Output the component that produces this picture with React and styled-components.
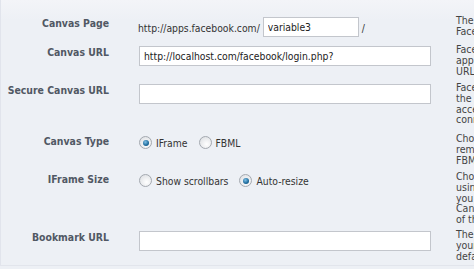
import React from "react";
import styled, { createGlobalStyle } from "styled-components";

const GlobalStyle = createGlobalStyle`
  html, body {
    margin: 0;
    padding: 0;
    background: #edf0f5;
    overflow: hidden;
  }
`;

const rows = [
  {
    label: "Canvas Page",
    kind: "page",
    h: 29,
    help: ["The base Canvas Page URL on", "Facebook for your application."],
  },
  {
    label: "Canvas URL",
    kind: "text",
    value: "http://localhost.com/facebook/login.php?",
    h: 38,
    help: [
      "Facebook pulls the content for your",
      "app's canvas pages from this base",
      "URL.",
    ],
  },
  {
    label: "Secure Canvas URL",
    kind: "text",
    value: "",
    h: 51,
    help: [
      "Facebook pulls content from this URL if",
      "the user is browsing Facebook over a",
      "accessing your app over a secure",
      "connection (https).",
    ],
  },
  {
    label: "Canvas Type",
    kind: "radio",
    h: 38,
    options: [
      { text: "IFrame", checked: true },
      { text: "FBML", checked: false },
    ],
    help: [
      "Choose IFrame for new apps. Please",
      "remember that support for FBML is",
      "FBML being deprecated.",
    ],
  },
  {
    label: "IFrame Size",
    kind: "radio",
    h: 58,
    options: [
      { text: "Show scrollbars", checked: false },
      { text: "Auto-resize", checked: true },
    ],
    help: [
      "Choose whether the iframe is sized",
      "using scrollbars, or whether",
      "you will call the auto-resize",
      "Canvas method to set the height",
      "of the iframe.",
    ],
  },
  {
    label: "Bookmark URL",
    kind: "text",
    value: "",
    h: 36,
    help: [
      "The URL that users will see when",
      "your app is bookmarked. Uses the",
      "default Canvas Page if left blank.",
    ],
  },
];

const App = () => {
  return (
    <>
      <GlobalStyle />
      <Panel>
        {rows.map((row) => (
          <Row key={row.label} $h={row.h}>
            <Label>{row.label}</Label>
            <Control>
              {row.kind === "page" && (
                <PageLine>
                  <Prefix>http://apps.facebook.com/</Prefix>
                  <SmallInput defaultValue="variable3" />
                  <Prefix>/</Prefix>
                </PageLine>
              )}
              {row.kind === "text" && <TextInput defaultValue={row.value} />}
              {row.kind === "radio" && (
                <RadioLine>
                  {row.options.map((opt) => (
                    <RadioLabel key={opt.text}>
                      <Radio
                        type="radio"
                        name={row.label}
                        defaultChecked={opt.checked}
                      />
                      {opt.text}
                    </RadioLabel>
                  ))}
                </RadioLine>
              )}
            </Control>
            <Help>
              {row.help.map((line, i) => (
                <div key={i}>{line}</div>
              ))}
            </Help>
          </Row>
        ))}
      </Panel>
    </>
  );
};

const Panel = styled.div`
  width: 474px;
  height: 266px;
  box-sizing: border-box;
  padding-top: 15px;
  background: linear-gradient(#f3f4f8, #edf0f5 20px);
  border-left: 1px solid #e1e4ec;
  border-bottom: 1px solid #e2e5ec;
  overflow: hidden;
`;

const Row = styled.div`
  display: flex;
  align-items: flex-start;
  height: ${(p) => p.$h}px;
`;

const Label = styled.div`
  flex: 0 0 108px;
  padding-top: 1px;
  text-align: right;
  font-family: "DejaVu Sans Condensed", "DejaVu Sans", sans-serif;
  font-weight: bold;
  font-size: 10.4px;
  line-height: 14px;
  color: #515864;
  white-space: nowrap;
`;

const Control = styled.div`
  flex: 0 0 292px;
  margin-left: 30px;
  padding-top: 2px;
  font-family: "DejaVu Sans Condensed", "DejaVu Sans", sans-serif;
  font-size: 10.3px;
  color: #333;
`;

const PageLine = styled.div`
  display: flex;
  align-items: center;
  gap: 3px;
  margin-left: -1px;
`;

const Prefix = styled.span`
  padding-top: 2px;
  white-space: nowrap;
`;

const inputBase = `
  box-sizing: border-box;
  height: 20px;
  border: 1px solid #c3c6cc;
  background: #fff;
  font-family: "DejaVu Sans Condensed", "DejaVu Sans", sans-serif;
  font-size: 10.3px;
  color: #222;
  padding: 0 4px;
  outline: none;
  margin: 0;
`;

const TextInput = styled.input`
  ${inputBase}
  width: 292px;
`;

const SmallInput = styled.input`
  ${inputBase}
  width: 96px;
`;

const RadioLine = styled.div`
  display: flex;
  align-items: center;
  gap: 11px;
  padding-top: 1px;
`;

const RadioLabel = styled.label`
  display: flex;
  align-items: center;
  gap: 4px;
  white-space: nowrap;
`;

const Radio = styled.input`
  appearance: none;
  margin: 0;
  width: 13px;
  height: 13px;
  border-radius: 50%;
  border: 1px solid #a4a9b0;
  background: radial-gradient(circle at 60% 65%, #ffffff 0%, #e4e6e9 70%, #cfd2d6 100%);
  box-sizing: border-box;
  display: grid;
  place-items: center;

  &:checked::after {
    content: "";
    width: 6px;
    height: 6px;
    border-radius: 50%;
    background: radial-gradient(circle at 40% 35%, #7fc0e6 0%, #1d6a9b 60%, #154d73 100%);
  }
`;

const Help = styled.div`
  flex: 0 0 auto;
  margin-left: 25px;
  font-family: "DejaVu Sans Condensed", "DejaVu Sans", sans-serif;
  font-size: 10.5px;
  line-height: 10.8px;
  color: #444;
  white-space: nowrap;
`;

export default App;
